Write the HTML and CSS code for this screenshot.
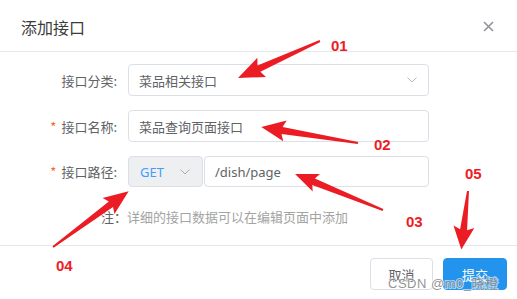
FILE: index.html
```html
<!DOCTYPE html>
<html lang="zh-CN">
<head>
    <meta charset="UTF-8">
    <title>添加接口</title>
    <link rel="stylesheet" href="styles.css">
</head>
<body>

    <div class="dialog">
        <div class="dialog-header">
            <span class="dialog-title">添加接口</span>
            <svg class="close-icon" width="11" height="11" viewBox="0 0 11 11">
                <path d="M1 1 L10 10 M10 1 L1 10" stroke="#909399" stroke-width="1.6" fill="none"/>
            </svg>
        </div>

        <div class="dialog-body">
            <div class="form-item">
                <label class="form-label">接口分类:</label>
                <div class="input select">
                    <span class="input-text">菜品相关接口</span>
                    <svg class="chevron" width="10" height="6" viewBox="0 0 10 6">
                        <path d="M0.5 0.5 L5 5 L9.5 0.5" stroke="#b4b7bd" stroke-width="1" fill="none"/>
                    </svg>
                </div>
            </div>

            <div class="form-item">
                <label class="form-label required">接口名称:</label>
                <div class="input">
                    <span class="input-text">菜品查询页面接口</span>
                </div>
            </div>

            <div class="form-item">
                <label class="form-label required">接口路径:</label>
                <div class="input-group">
                    <div class="method">
                        <span class="method-text">GET</span>
                        <svg class="chevron" width="10" height="6" viewBox="0 0 10 6">
                            <path d="M0.5 0.5 L5 5 L9.5 0.5" stroke="#a8abb2" stroke-width="1" fill="none"/>
                        </svg>
                    </div>
                    <div class="input path">
                        <span class="input-text latin">/dish/page</span>
                    </div>
                </div>
            </div>

            <p class="tip"><span class="tip-key">注：</span>详细的接口数据可以在编辑页面中添加</p>
        </div>

        <div class="dialog-footer">
            <button class="btn">取消</button>
            <button class="btn btn-primary">提交</button>
        </div>
    </div>

    <!-- red annotation arrows drawn over the dialog -->
    <svg class="marks" width="517" height="299" viewBox="0 0 517 299">
        <g fill="#ec1c24">
            <polygon transform="translate(320,41) rotate(155.7)" points="0,-1 67,-3.5 64,-10.5 90,0 64,10.5 67,3.5 0,1"/>
            <polygon transform="translate(358,143) rotate(189.4)" points="0,-1 77,-3.5 74,-10.5 98,0 74,10.5 77,3.5 0,1"/>
            <polygon transform="translate(383,210) rotate(202.2)" points="0,-1 75,-3.5 72,-9.5 95,0 72,9.5 75,3.5 0,1"/>
            <polygon transform="translate(53,247) rotate(-36.4)" points="0,-1 72,-3.5 69,-10 94,0 69,10 72,3.5 0,1"/>
            <polygon transform="translate(468,191) rotate(96.5)" points="0,-1 39,-3.5 36,-10.5 59,0 36,10.5 39,3.5 0,1"/>
        </g>
        <g class="mark-num">
            <text x="331" y="51">01</text>
            <text x="374" y="150">02</text>
            <text x="406" y="227">03</text>
            <text x="56" y="271">04</text>
            <text x="465" y="179">05</text>
        </g>
        <text class="watermark" x="388" y="288" textLength="110">CSDN @m0_晓橙</text>
    </svg>

</body>
</html>
```

FILE: styles.css
```css
body { margin: 0; position: relative; overflow: hidden; background: #fff; font-family: "Noto Sans", "Noto Sans CJK SC", sans-serif; }

.dialog { width: 517px; height: 299px; }

.dialog-header { height: 52px; padding: 2px 23px 0 21px; box-sizing: border-box; display: flex; align-items: center; justify-content: space-between; border-bottom: 1px solid #e4e7ed; }
.dialog-title { font-size: 16px; color: #3c3c3c; font-family: "Noto Sans CJK SC", sans-serif; }
.close-icon { display: block; }

.dialog-body { padding: 12px 0 18px 0; }
.form-item { display: flex; align-items: center; height: 32px; margin-bottom: 14px; }
.form-item:nth-child(3) { height: 31px; }
.form-label { width: 128px; padding-right: 11px; box-sizing: border-box; text-align: right; font-size: 13px; color: #606266; font-family: "Noto Sans CJK SC", sans-serif; }
.form-label.required::before { content: "*"; color: #f56a23; margin-right: 5px; }

.input { width: 301px; height: 100%; box-sizing: border-box; border: 1px solid #dcdfe6; border-radius: 4px; display: flex; align-items: center; justify-content: space-between; padding: 0 11px 0 10px; }
.input-text { font-size: 13px; color: #606266; font-family: "Noto Sans CJK SC", sans-serif; }
.input-text.latin { font-family: "Noto Sans", sans-serif; }
.chevron { display: block; }

.input-group { display: flex; height: 100%; }
.method { width: 75px; height: 100%; box-sizing: border-box; background: #eeeff1; border: 1px solid #dcdfe6; border-radius: 4px; display: flex; align-items: center; justify-content: space-between; padding: 0 12px 0 11px; margin-right: 1px; }
.method-text { font-size: 13px; color: #409eff; }
.input.path { width: 225px; }

.tip { margin: 20px 0 0 101px; font-size: 13px; line-height: 20px; color: #a3a3a3; font-family: "Noto Sans CJK SC", sans-serif; }
.tip-key { color: #606266; }

.dialog-footer { border-top: 1px solid #e4e7ed; padding: 12px 10px 0 0; display: flex; justify-content: flex-end; gap: 10px; }
.btn { height: 32px; width: 63px; border: 1px solid #dcdfe6; border-radius: 4px; background: #fff; color: #606266; font-size: 13px; font-family: "Noto Sans CJK SC", sans-serif; padding: 0; }
.btn-primary { width: 64px; background: #2394ee; border-color: #2394ee; color: #fff; }

.marks { position: absolute; top: 0; left: 0; pointer-events: none; }
.mark-num { font-family: "Liberation Sans", Arial, sans-serif; font-weight: bold; font-size: 15px; fill: #ee1c25; }
.watermark { font-family: "Liberation Sans", "Noto Sans CJK SC", sans-serif; font-size: 13px; fill: rgba(110, 110, 110, 0.75); stroke: rgba(255, 255, 255, 0.6); stroke-width: 2px; paint-order: stroke; }
```
